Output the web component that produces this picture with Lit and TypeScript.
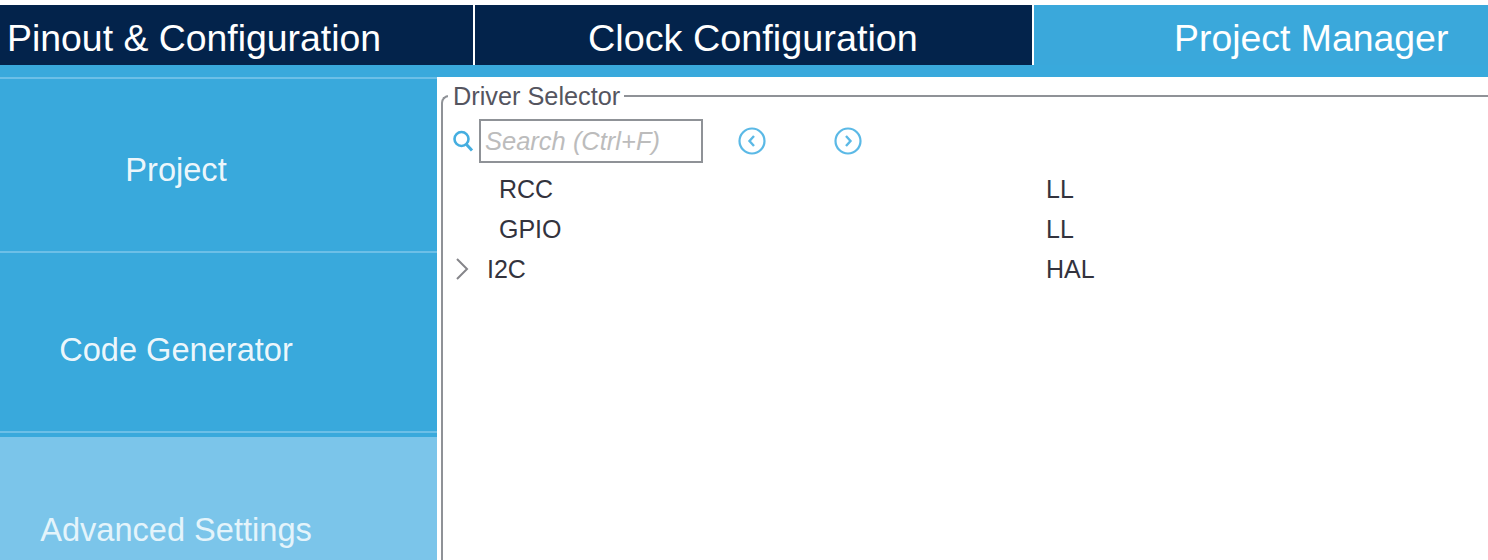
import { LitElement, html, css } from "lit";
import { customElement } from "lit/decorators.js";

@customElement("app-root")
export class AppRoot extends LitElement {
  static styles = css`
    :host {
      display: block;
      width: 1488px;
      height: 560px;
      overflow: hidden;
      background: #fff;
      font-family: "Liberation Sans", Arial, sans-serif;
      color: #3c3c46;
    }
    * { box-sizing: border-box; }
    .top { padding-top: 5px; }
    .tabs { display: flex; height: 60px; gap: 2px; background: #fff; }
    .tab {
      display: flex;
      align-items: center;
      height: 60px;
      background: #03234b;
      color: #fff;
      font-size: 37.4px;
      white-space: nowrap;
      padding-top: 7px;
    }
    .t1 { width: 473px; padding-left: 7px; }
    .t2 { width: 557px; padding-left: 113px; font-size: 37.8px; }
    .t3 { flex: 1; padding-left: 140px; background: #3aa8db; }
    .strip { height: 12px; background: #39a9dc; }
    .body { display: grid; grid-template-columns: 437px 1fr; height: 483px; }
    .side { display: grid; grid-template-rows: 174px 180px 1fr; }
    .item {
      display: flex;
      justify-content: center;
      background: #39a9dc;
      border-top: 2px solid #6cbfe7;
      color: rgba(255, 255, 255, 0.93);
      font-size: 32.6px;
      padding-right: 85px;
      line-height: 38px;
    }
    .item.p { padding-top: 72px; }
    .item.c { padding-top: 78px; }
    .item.a {
      background: #7bc5ea;
      color: #e4f4fb;
      padding-top: 78px;
      box-shadow: inset 0 4px 0 #39a9dc;
    }
    fieldset {
      margin: 3px 0 -40px 4px;
      padding: 0;
      min-width: 0;
      border: 0;
      border-top: 2px solid #8f9297;
      border-left: 2px solid #8f9297;
      border-top-left-radius: 8px;
      height: calc(100% + 20px);
    }
    legend {
      margin-left: 5px;
      padding: 1px 4px 1px 5px;
      font-size: 25.3px;
      line-height: 30px;
      color: #55555f;
    }
    .bar { display: flex; align-items: center; height: 44px; margin-top: 7px; padding-left: 9px; }
    .search { width: 22px; height: 24px; flex: none; margin-right: 5px; }
    .input {
      width: 224px;
      height: 44px;
      border: 2px solid #8f9297;
      font-style: italic;
      font-size: 25.5px;
      line-height: 40px;
      color: #bcbcbc;
      padding-left: 4px;
      white-space: nowrap;
      flex: none;
    }
    .nav { width: 30px; height: 30px; flex: none; margin-left: 34px; }
    .nav + .nav { margin-left: 66px; }
    .rows { margin-top: 6px; }
    .row {
      display: grid;
      grid-template-columns: 603px 1fr;
      align-items: center;
      height: 40px;
      font-size: 25px;
      color: #33333d;
    }
    .name { display: flex; align-items: center; padding-left: 56px; }
    .name.tree { padding-left: 11px; gap: 15px; }
    .chev { width: 18px; height: 22px; flex: none; }
  `;

  render() {
    return html`
      <div class="top">
        <div class="tabs">
          <div class="tab t1">Pinout &amp; Configuration</div>
          <div class="tab t2">Clock Configuration</div>
          <div class="tab t3">Project Manager</div>
        </div>
        <div class="strip"></div>
        <div class="body">
          <div class="side">
            <div class="item p">Project</div>
            <div class="item c">Code Generator</div>
            <div class="item a">Advanced Settings</div>
          </div>
          <div>
            <fieldset>
              <legend>Driver Selector</legend>
              <div class="bar">
                <svg class="search" viewBox="0 0 22 24" fill="none" stroke="#45aee0">
                  <circle cx="9.5" cy="10" r="7" stroke-width="2.6" />
                  <path d="M14.5 15.5 L20 21.5" stroke-width="3" />
                </svg>
                <div class="input">Search (Ctrl+F)</div>
                <svg class="nav" viewBox="0 0 30 30" fill="none" stroke="#5bb9e6" stroke-width="2.2">
                  <circle cx="15" cy="15" r="12.5" />
                  <path d="M17 10 L12.5 15 L17 20" stroke-width="2.4" />
                </svg>
                <svg class="nav" viewBox="0 0 30 30" fill="none" stroke="#5bb9e6" stroke-width="2.2">
                  <circle cx="15" cy="15" r="12.5" />
                  <path d="M13 10 L17.5 15 L13 20" stroke-width="2.4" />
                </svg>
              </div>
              <div class="rows">
                <div class="row"><div class="name">RCC</div><div>LL</div></div>
                <div class="row"><div class="name">GPIO</div><div>LL</div></div>
                <div class="row">
                  <div class="name tree">
                    <svg class="chev" viewBox="0 0 18 22" fill="none" stroke="#85858a" stroke-width="2">
                      <path d="M3 1 L13 11 L3 21" />
                    </svg>
                    <span>I2C</span>
                  </div>
                  <div>HAL</div>
                </div>
              </div>
            </fieldset>
          </div>
        </div>
      </div>
    `;
  }
}
